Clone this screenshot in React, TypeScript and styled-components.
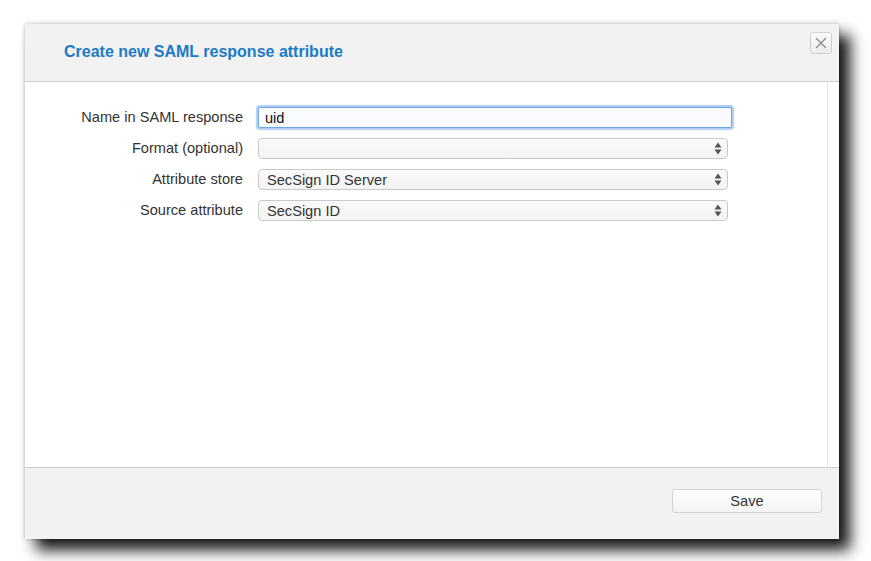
import React from "react"
import styled, { createGlobalStyle } from "styled-components"

const GlobalStyle = createGlobalStyle`
  html, body {
    margin: 0;
    padding: 0;
    background: #ffffff;
    font-family: "Liberation Sans", Arial, sans-serif;
  }
`

const Page = styled.div`
  width: 871px;
  height: 561px;
  padding: 24px 0 0 25px;
  box-sizing: border-box;
`

const Dialog = styled.div`
  width: 814px;
  height: 515px;
  display: flex;
  flex-direction: column;
  background: #ffffff;
  box-shadow: 11px 11px 14px rgba(0, 0, 0, 0.92), 0 0 4px rgba(0, 0, 0, 0.25);
`

const Header = styled.div`
  height: 58px;
  flex-shrink: 0;
  display: flex;
  justify-content: space-between;
  align-items: flex-start;
  padding: 8px 7px 0 39px;
  box-sizing: border-box;
  background: #f2f2f2;
  border-bottom: 1px solid #cdcdcd;
`

const Title = styled.h1`
  margin: 10px 0 0;
  font-size: 16px;
  line-height: 20px;
  font-weight: bold;
  color: #1b7ac5;
`

const CloseBtn = styled.button`
  width: 22px;
  height: 22px;
  padding: 0;
  display: flex;
  align-items: center;
  justify-content: center;
  border: 1px solid #cfcfcf;
  border-radius: 3px;
  background: linear-gradient(#fbfbfb, #ededed);
  cursor: pointer;
`

const Body = styled.div`
  flex-grow: 1;
  display: flex;
`

const Content = styled.div`
  flex-grow: 1;
  padding-top: 25px;
  border-right: 1px solid #e4e4e4;
`

const Gutter = styled.div`
  width: 11px;
  flex-shrink: 0;
`

const Form = styled.div`
  display: grid;
  grid-template-columns: 218px auto;
  grid-auto-rows: 21px;
  column-gap: 15px;
  row-gap: 10px;
  align-items: center;
`

const Label = styled.label`
  text-align: right;
  font-size: 14.6px;
  color: #333333;
  line-height: 21px;
`

const TextInput = styled.input`
  width: 474px;
  height: 21px;
  box-sizing: border-box;
  margin: 0;
  padding: 0 6px;
  font-family: "Liberation Sans", Arial, sans-serif;
  font-size: 14.6px;
  color: #111111;
  background: #f9fbff;
  border: 1px solid #6fa6e6;
  border-radius: 2px;
  box-shadow: 0 0 1px 2px rgba(110, 165, 235, 0.55);
  outline: none;
`

const SelectBox = styled.div`
  width: 470px;
  height: 21px;
  box-sizing: border-box;
  display: flex;
  align-items: center;
  justify-content: space-between;
  padding: 0 5px 0 8px;
  font-size: 14.6px;
  color: #333333;
  background: linear-gradient(#fafafa, #f3f3f3);
  border: 1px solid #c9c9c9;
  border-radius: 4px;
`

const Footer = styled.div`
  height: 72px;
  flex-shrink: 0;
  display: flex;
  justify-content: flex-end;
  align-items: flex-start;
  padding: 21px 17px 0 0;
  box-sizing: border-box;
  background: #f2f2f2;
  border-top: 1px solid #cdcdcd;
`

const SaveBtn = styled.button`
  width: 150px;
  height: 24px;
  font-family: "Liberation Sans", Arial, sans-serif;
  font-size: 14.6px;
  color: #333333;
  background: linear-gradient(#ffffff, #f4f4f4);
  border: 1px solid #d4d4d4;
  border-radius: 3px;
  cursor: pointer;
`

function Arrows() {
  return (
    <svg width="8" height="13" viewBox="0 0 8 13">
      <path d="M4 0.5 L7.5 5.5 L0.5 5.5 Z" fill="#555" />
      <path d="M4 12.5 L7.5 7.5 L0.5 7.5 Z" fill="#555" />
    </svg>
  )
}

function Select({ value }: { value: string }) {
  return (
    <SelectBox>
      <span>{value}</span>
      <Arrows />
    </SelectBox>
  )
}

export default function App() {
  return (
    <>
      <GlobalStyle />
      <Page>
        <Dialog>
          <Header>
            <Title>Create new SAML response attribute</Title>
            <CloseBtn aria-label="close">
              <svg width="12" height="12" viewBox="0 0 12 12">
                <path d="M1 1 L11 11 M11 1 L1 11" stroke="#8a8a8a" strokeWidth="1.4" />
              </svg>
            </CloseBtn>
          </Header>
          <Body>
            <Content>
              <Form>
                <Label>Name in SAML response</Label>
                <TextInput defaultValue="uid" />
                <Label>Format (optional)</Label>
                <Select value="" />
                <Label>Attribute store</Label>
                <Select value="SecSign ID Server" />
                <Label>Source attribute</Label>
                <Select value="SecSign ID" />
              </Form>
            </Content>
            <Gutter />
          </Body>
          <Footer>
            <SaveBtn>Save</SaveBtn>
          </Footer>
        </Dialog>
      </Page>
    </>
  )
}
